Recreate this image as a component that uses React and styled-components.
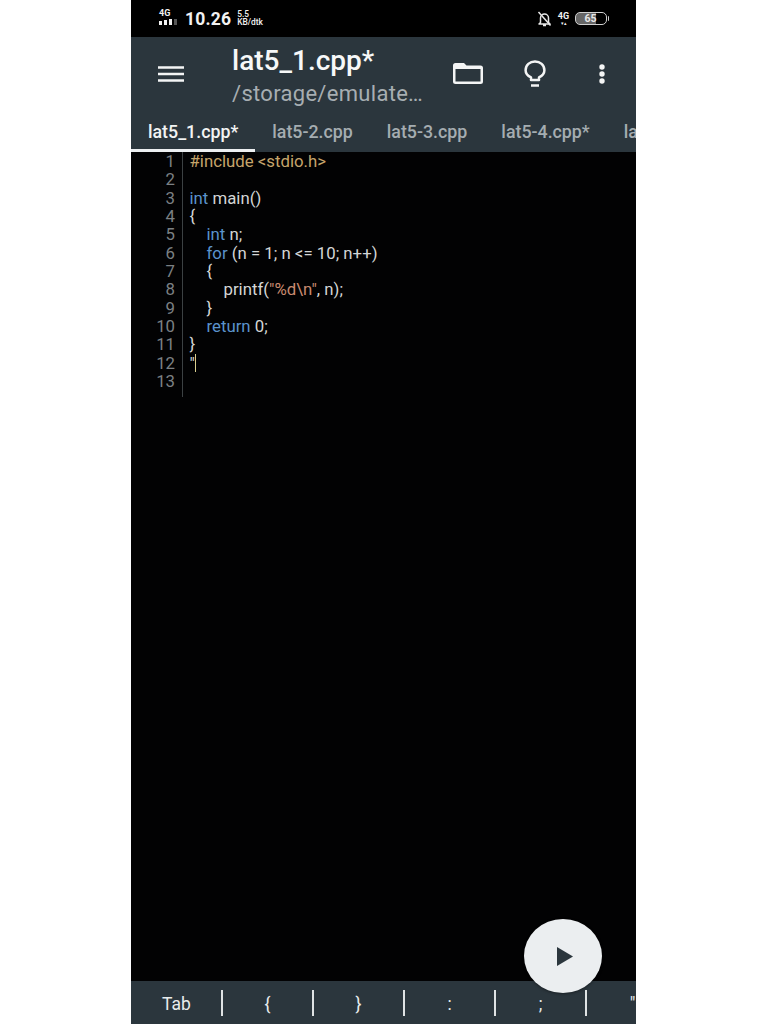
import React from "react";
import styled, { createGlobalStyle } from "styled-components";

const GlobalStyle = createGlobalStyle`
  html, body {
    margin: 0;
    padding: 0;
    background: #ffffff;
    font-family: Roboto, "Liberation Sans", sans-serif;
  }
`;

const Page = styled.div`
  width: 768px;
  height: 1024px;
  overflow: hidden;
  padding-left: 131px;
  box-sizing: border-box;
`;

const Phone = styled.div`
  position: relative;
  width: 505px;
  height: 1024px;
  display: flex;
  flex-direction: column;
  overflow: hidden;
  background: #020202;
`;

// status bar
const StatusBar = styled.div`
  height: 37px;
  flex: none;
  display: flex;
  align-items: center;
  background: #000;
  color: #f2f2f2;
  padding: 0 27px 0 28px;
`;

const Signal = styled.div`
  width: 21px;
  display: flex;
  flex-direction: column;
  gap: 1px;
  margin-top: -3px;
`;

const TinyLabel = styled.span`
  font-size: 9px;
  font-weight: 700;
  line-height: 9px;
`;

const Bars = styled.div`
  display: flex;
  align-items: flex-end;
  gap: 2px;
`;

const Bar = styled.span`
  width: 3px;
  height: ${(p) => p.$h}px;
  background: ${(p) => (p.$off ? "#555" : "#f2f2f2")};
`;

const Clock = styled.span`
  margin-left: 5px;
  font-size: 17.5px;
  font-weight: 700;
  letter-spacing: 0.2px;
`;

const Speed = styled.div`
  margin-left: 6px;
  display: flex;
  flex-direction: column;
  font-size: 8.4px;
  font-weight: 500;
  line-height: 8.5px;
  margin-top: -1px;
`;

const StatusRight = styled.div`
  margin-left: auto;
  display: flex;
  align-items: center;
`;

const NetRight = styled.div`
  margin-left: 6px;
  width: 12px;
  display: flex;
  flex-direction: column;
  align-items: center;
`;

const Triangles = styled.span`
  font-size: 5px;
  line-height: 5px;
`;

const Battery = styled.div`
  position: relative;
  margin-left: 5px;
  width: 30px;
  height: 11px;
  border: 1px solid #d0d0d0;
  border-radius: 5px;
  overflow: hidden;
  display: flex;
  align-items: center;
  justify-content: center;
  font-size: 10.5px;
  font-weight: 700;
  color: #e8e8e8;
  background: linear-gradient(90deg, #666 0 65%, #000 65%);
`;

const BatteryTip = styled.span`
  width: 1.5px;
  height: 5px;
  margin-left: 1px;
  background: #d0d0d0;
  border-radius: 0 1px 1px 0;
`;

// toolbar
const Toolbar = styled.div`
  height: 73px;
  flex: none;
  display: flex;
  align-items: center;
  background: #2b363d;
  color: #fff;
`;

const IconSlot = styled.div`
  flex: none;
  width: ${(p) => p.$w}px;
  margin-left: ${(p) => p.$ml || 0}px;
  display: flex;
  justify-content: center;
  align-items: center;
`;

const TitleBlock = styled.div`
  width: 197px;
  margin-left: 47px;
  align-self: stretch;
  padding-top: 8px;
  display: flex;
  flex-direction: column;
`;

const Title = styled.div`
  font-size: 28px;
  font-weight: 500;
  line-height: 32px;
  color: #f7f8f8;
`;

const Subtitle = styled.div`
  margin-top: 1px;
  font-size: 22px;
  line-height: 32px;
  letter-spacing: 0.3px;
  color: #a7aeb2;
  white-space: nowrap;
`;

// tabs
const Tabs = styled.div`
  height: 42px;
  flex: none;
  display: flex;
  background: #2b363d;
  overflow: hidden;
`;

const Tab = styled.div`
  flex: none;
  box-sizing: border-box;
  height: 42px;
  padding: 3px 17px 0;
  display: flex;
  align-items: center;
  font-size: 17.8px;
  font-weight: 500;
  white-space: nowrap;
  color: ${(p) => (p.$active ? "#f2f4f4" : "#a5adb1")};
  border-bottom: 3px solid ${(p) => (p.$active ? "#eceff1" : "transparent")};
`;

// editor
const Editor = styled.div`
  flex: 1;
  display: flex;
  align-items: flex-start;
  background: #020203;
  font-size: 16.8px;
  line-height: 18.33px;
`;

const Gutter = styled.div`
  width: 52px;
  box-sizing: border-box;
  padding-right: 7px;
  height: 245px;
  border-right: 1px solid #3c4143;
  text-align: right;
  color: #7b8083;
  flex: none;
`;

const Code = styled.div`
  margin-left: 6.5px;
  color: #d4d6d6;
  white-space: pre;
`;

const Line = styled.div`
  height: 18.33px;
  padding-left: ${(p) => (p.$indent || 0) * 17}px;
`;

const Keyword = styled.span`
  color: #5b93cc;
`;

const Include = styled.span`
  color: #c6a56b;
`;

const Str = styled.span`
  color: #c98a70;
`;

const Caret = styled.span`
  display: inline-block;
  width: 1.5px;
  height: 18px;
  vertical-align: top;
  background: #d8cf8f;
`;

// bottom keys
const KeyBar = styled.div`
  height: 43px;
  flex: none;
  display: flex;
  align-items: center;
  padding-left: 1px;
  background: #2b363d;
  color: #e9ecec;
  overflow: hidden;
`;

const Key = styled.div`
  flex: none;
  width: 91px;
  height: 26px;
  margin-top: 1px;
  padding-top: 2px;
  box-sizing: border-box;
  display: flex;
  align-items: center;
  justify-content: center;
  font-size: 17.5px;
  border-right: ${(p) => (p.$last ? "none" : "2px solid #dfe3e4")};
`;

const Fab = styled.div`
  position: absolute;
  left: 393px;
  top: 919px;
  width: 78px;
  height: 74px;
  padding-left: 4px;
  box-sizing: border-box;
  border-radius: 50%;
  background: #ebeef0;
  box-shadow: 0 1px 3px rgba(0, 0, 0, 0.4);
  display: flex;
  align-items: center;
  justify-content: center;
`;

const tabs = ["lat5_1.cpp*", "lat5-2.cpp", "lat5-3.cpp", "lat5-4.cpp*", "la"];
const keys = ["Tab", "{", "}", ":", ";", '"'];

const MenuIcon = () => (
  <svg width="28" height="16" viewBox="0 0 28 16">
    <path d="M1 1.500h26M1 8h26M1 14.500h26" stroke="#f4f5f5" strokeWidth="2.400" />
  </svg>
);

const FolderIcon = () => (
  <svg width="30" height="21" viewBox="0 0 30 21">
    <path
      fillRule="evenodd"
      d="M2.500 0h8.500l2.500 2.500h14a2.500 2.500 0 0 1 2.500 2.500v13.500a2.500 2.500 0 0 1-2.500 2.500h-25a2.500 2.500 0 0 1-2.500-2.500v-16a2.500 2.500 0 0 1 2.500-2.500zM2.500 6v12.500h25v-12.500z"
      fill="#f4f5f5"
    />
  </svg>
);

const BulbIcon = () => (
  <svg width="22" height="28" viewBox="0 0 22 28" fill="none">
    <path
      d="M7 20v-2.600C3.800 15.800 1.600 13 1.600 10.200 1.600 5 5.800 1.400 11 1.400s9.400 3.600 9.400 8.800c0 2.800-2.200 5.600-5.400 7.200V20z"
      stroke="#f4f5f5"
      strokeWidth="2.500"
      strokeLinejoin="round"
    />
    <path d="M7 25.500h8" stroke="#f4f5f5" strokeWidth="2.500" />
  </svg>
);

const DotsIcon = () => (
  <svg width="8" height="20" viewBox="0 0 8 20">
    <circle cx="4" cy="3" r="2.700" fill="#f4f5f5" />
    <circle cx="4" cy="10" r="2.700" fill="#f4f5f5" />
    <circle cx="4" cy="17" r="2.700" fill="#f4f5f5" />
  </svg>
);

const MutedBell = () => (
  <svg width="15" height="16" viewBox="0 0 15 16" fill="none">
    <path
      d="M3.500 11.500V7a4 4 0 0 1 8 0v4.500l1.500 1.500H2zM6 14.500h3"
      stroke="#e8e8e8"
      strokeWidth="1.500"
      strokeLinejoin="round"
    />
    <path d="M1.500 1l12 13.500" stroke="#e8e8e8" strokeWidth="1.500" />
  </svg>
);

const PlayIcon = () => (
  <svg width="16" height="19" viewBox="0 0 16 19">
    <path d="M0 0l16 9.500L0 19z" fill="#2b363d" />
  </svg>
);

export default function App() {
  return (
    <Page>
      <GlobalStyle />
      <Phone>
        <StatusBar>
          <Signal>
            <TinyLabel>4G</TinyLabel>
            <Bars>
              <Bar $h={4} />
              <Bar $h={5} />
              <Bar $h={6} />
              <Bar $h={6} $off />
            </Bars>
          </Signal>
          <Clock>10.26</Clock>
          <Speed>
            <span>5.5</span>
            <span>KB/dtk</span>
          </Speed>
          <StatusRight>
            <MutedBell />
            <NetRight>
              <TinyLabel>4G</TinyLabel>
              <Triangles>▾▴</Triangles>
            </NetRight>
            <Battery>65</Battery>
            <BatteryTip />
          </StatusRight>
        </StatusBar>

        <Toolbar>
          <IconSlot $w={28} $ml={26}>
            <MenuIcon />
          </IconSlot>
          <TitleBlock>
            <Title>lat5_1.cpp*</Title>
            <Subtitle>/storage/emulate…</Subtitle>
          </TitleBlock>
          <IconSlot $w={30} $ml={24}>
            <FolderIcon />
          </IconSlot>
          <IconSlot $w={22} $ml={41}>
            <BulbIcon />
          </IconSlot>
          <IconSlot $w={8} $ml={52}>
            <DotsIcon />
          </IconSlot>
        </Toolbar>

        <Tabs>
          {tabs.map((t, i) => (
            <Tab key={t} $active={i === 0}>
              {t}
            </Tab>
          ))}
        </Tabs>

        <Editor>
          <Gutter>
            {[...Array(13)].map((_, i) => (
              <div key={i}>{i + 1}</div>
            ))}
          </Gutter>
          <Code>
            <Line>
              <Include>#include &lt;stdio.h&gt;</Include>
            </Line>
            <Line />
            <Line>
              <Keyword>int</Keyword> main()
            </Line>
            <Line>{"{"}</Line>
            <Line $indent={1}>
              <Keyword>int</Keyword> n;
            </Line>
            <Line $indent={1}>
              <Keyword>for</Keyword> (n = 1; n &lt;= 10; n++)
            </Line>
            <Line $indent={1}>{"{"}</Line>
            <Line $indent={2}>
              printf(<Str>"%d\n"</Str>, n);
            </Line>
            <Line $indent={1}>{"}"}</Line>
            <Line $indent={1}>
              <Keyword>return</Keyword> 0;
            </Line>
            <Line>{"}"}</Line>
            <Line>
              "<Caret />
            </Line>
          </Code>
        </Editor>

        <KeyBar>
          {keys.map((k, i) => (
            <Key key={k} $last={i === keys.length - 1}>
              {k}
            </Key>
          ))}
        </KeyBar>

        <Fab>
          <PlayIcon />
        </Fab>
      </Phone>
    </Page>
  );
}
